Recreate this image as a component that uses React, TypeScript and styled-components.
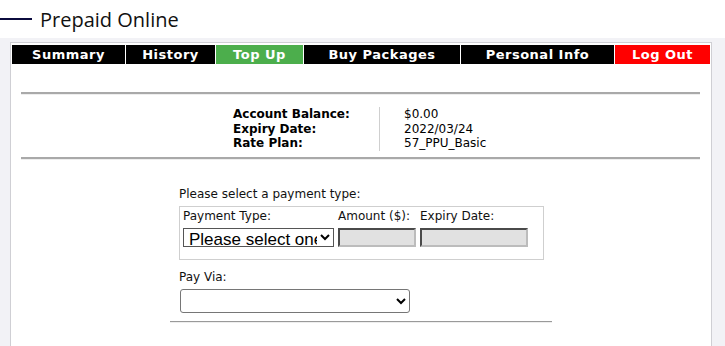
import React from 'react';
import styled, { createGlobalStyle } from 'styled-components';

const GlobalStyle = createGlobalStyle`
  body {
    margin: 0;
    background: #f2f2f6;
    font-family: 'DejaVu Sans', Verdana, sans-serif;
  }
`;

const tabs = [
  { label: 'Summary', width: 114, bg: '#000' },
  { label: 'History', width: 90, bg: '#000' },
  { label: 'Top Up', width: 88, bg: '#4cae4c' },
  { label: 'Buy Packages', width: 157, bg: '#000' },
  { label: 'Personal Info', width: 154, bg: '#000' },
  { label: 'Log Out', width: 95, bg: '#ff0000' },
];

function App() {
  return (
    <>
      <GlobalStyle />
      <Header>
        <HeaderLine />
        <Title>Prepaid Online</Title>
      </Header>
      <Page>
        <Panel>
          <Nav>
            {tabs.map((t) => (
              <Tab key={t.label} $bg={t.bg} $width={t.width}>
                {t.label}
              </Tab>
            ))}
          </Nav>
          <Content>
            <Rule />
            <InfoTable>
              <tbody>
                <tr>
                  <InfoLabel>Account Balance:</InfoLabel>
                  <InfoValue>$0.00</InfoValue>
                </tr>
                <tr>
                  <InfoLabel>Expiry Date:</InfoLabel>
                  <InfoValue>2022/03/24</InfoValue>
                </tr>
                <tr>
                  <InfoLabel>Rate Plan:</InfoLabel>
                  <InfoValue>57_PPU_Basic</InfoValue>
                </tr>
              </tbody>
            </InfoTable>
            <Rule />
            <Form>
              <FormText>Please select a payment type:</FormText>
              <PaymentBox>
                <Field>
                  <FieldLabel>Payment Type:</FieldLabel>
                  <TypeSelect defaultValue="">
                    <option value="">Please select one</option>
                  </TypeSelect>
                </Field>
                <Field>
                  <FieldLabel>Amount ($):</FieldLabel>
                  <GrayInput $width={78} disabled />
                </Field>
                <Field>
                  <FieldLabel>Expiry Date:</FieldLabel>
                  <GrayInput $width={108} disabled />
                </Field>
              </PaymentBox>
              <PayVia>
                <FormText>Pay Via:</FormText>
                <ViaSelect defaultValue="">
                  <option value=""></option>
                </ViaSelect>
              </PayVia>
            </Form>
            <ShortRule />
          </Content>
        </Panel>
      </Page>
    </>
  );
}

const Header = styled.header`
  display: flex;
  align-items: center;
  height: 38px;
  background: #fff;
`;

const HeaderLine = styled.div`
  width: 32px;
  height: 2px;
  background: #0b0b3e;
`;

const Title = styled.h1`
  margin: 0 0 0 8px;
  font-family: 'Open Sans', 'Noto Sans', sans-serif;
  font-weight: 400;
  font-size: 20px;
  color: #111;
  line-height: 1;
  transform: translateY(1px);
`;

const Page = styled.div`
  padding: 4px 14px 0 10px;
  height: 308px;
  box-sizing: border-box;
`;

const Panel = styled.div`
  width: 702px;
  height: 100%;
  box-sizing: border-box;
  background: #fff;
  border: 1px solid #cfcfd4;
  border-bottom: none;
  padding: 2px 1px 0 1px;
`;

const Nav = styled.nav`
  display: flex;
  height: 19px;
`;

const Tab = styled.div<{ $bg: string; $width: number }>`
  width: ${({ $width }) => $width}px;
  flex: none;
  background: ${({ $bg }) => $bg};
  color: #fff;
  font-weight: bold;
  font-size: 13px;
  letter-spacing: 0.5px;
  line-height: 19px;
  text-align: center;
  border-right: 1px solid #fff;
  box-sizing: border-box;
  &:last-child {
    border-right: none;
    flex: 1;
  }
`;

const Content = styled.div`
  padding: 28px 10px 0 9px;
`;

const Rule = styled.hr`
  margin: 0;
  border: none;
  border-top: 2px solid #a9a9a9;
  border-bottom: 1px solid #eee;
`;

const InfoTable = styled.table`
  border-collapse: collapse;
  margin: 12px 0 6px 212px;
  font-size: 12px;
  color: #000;
`;

const InfoLabel = styled.td`
  font-weight: bold;
  padding: 0;
  width: 146px;
  line-height: 14.5px;
`;

const InfoValue = styled.td`
  padding: 0 0 0 24px;
  border-left: 1px solid #cfcfcf;
  line-height: 14.5px;
`;

const Form = styled.div`
  margin: 27px 0 0 158px;
  font-size: 12px;
  color: #111;
`;

const FormText = styled.div`
  line-height: 15px;
`;

const PaymentBox = styled.div`
  display: flex;
  gap: 4px;
  width: 365px;
  height: 54px;
  box-sizing: border-box;
  border: 1px solid #cfcfcf;
  margin-top: 4px;
  padding: 2px 3px;
`;

const Field = styled.div`
  display: flex;
  flex-direction: column;
  gap: 4px;
`;

const FieldLabel = styled.div`
  line-height: 15px;
  white-space: nowrap;
`;

const TypeSelect = styled.select`
  width: 151px;
  height: 19px;
  padding: 0 0 0 1px;
  font-family: 'Liberation Sans', Arial, sans-serif;
  font-size: 17px;
  border: 1px solid #555;
  border-radius: 0;
  background: #fff;
  color: #000;
`;

const GrayInput = styled.input<{ $width: number }>`
  width: ${({ $width }) => $width}px;
  height: 19px;
  box-sizing: border-box;
  background: #e1e1e1;
  border: 2px solid;
  border-color: #4a4a4a #bcbcbc #bcbcbc #4a4a4a;
  padding: 0;
`;

const PayVia = styled.div`
  margin-top: 10px;
  display: flex;
  flex-direction: column;
  gap: 4px;
`;

const ViaSelect = styled.select`
  width: 230px;
  height: 24px;
  border: 1px solid #767676;
  border-radius: 3px;
  background: #fff;
  margin-left: 1px;
`;

const ShortRule = styled.hr`
  margin: 8px 0 0 149px;
  width: 382px;
  border: none;
  border-top: 1px solid #9a9a9a;
  border-bottom: 1px solid #eee;
`;

export default App;
